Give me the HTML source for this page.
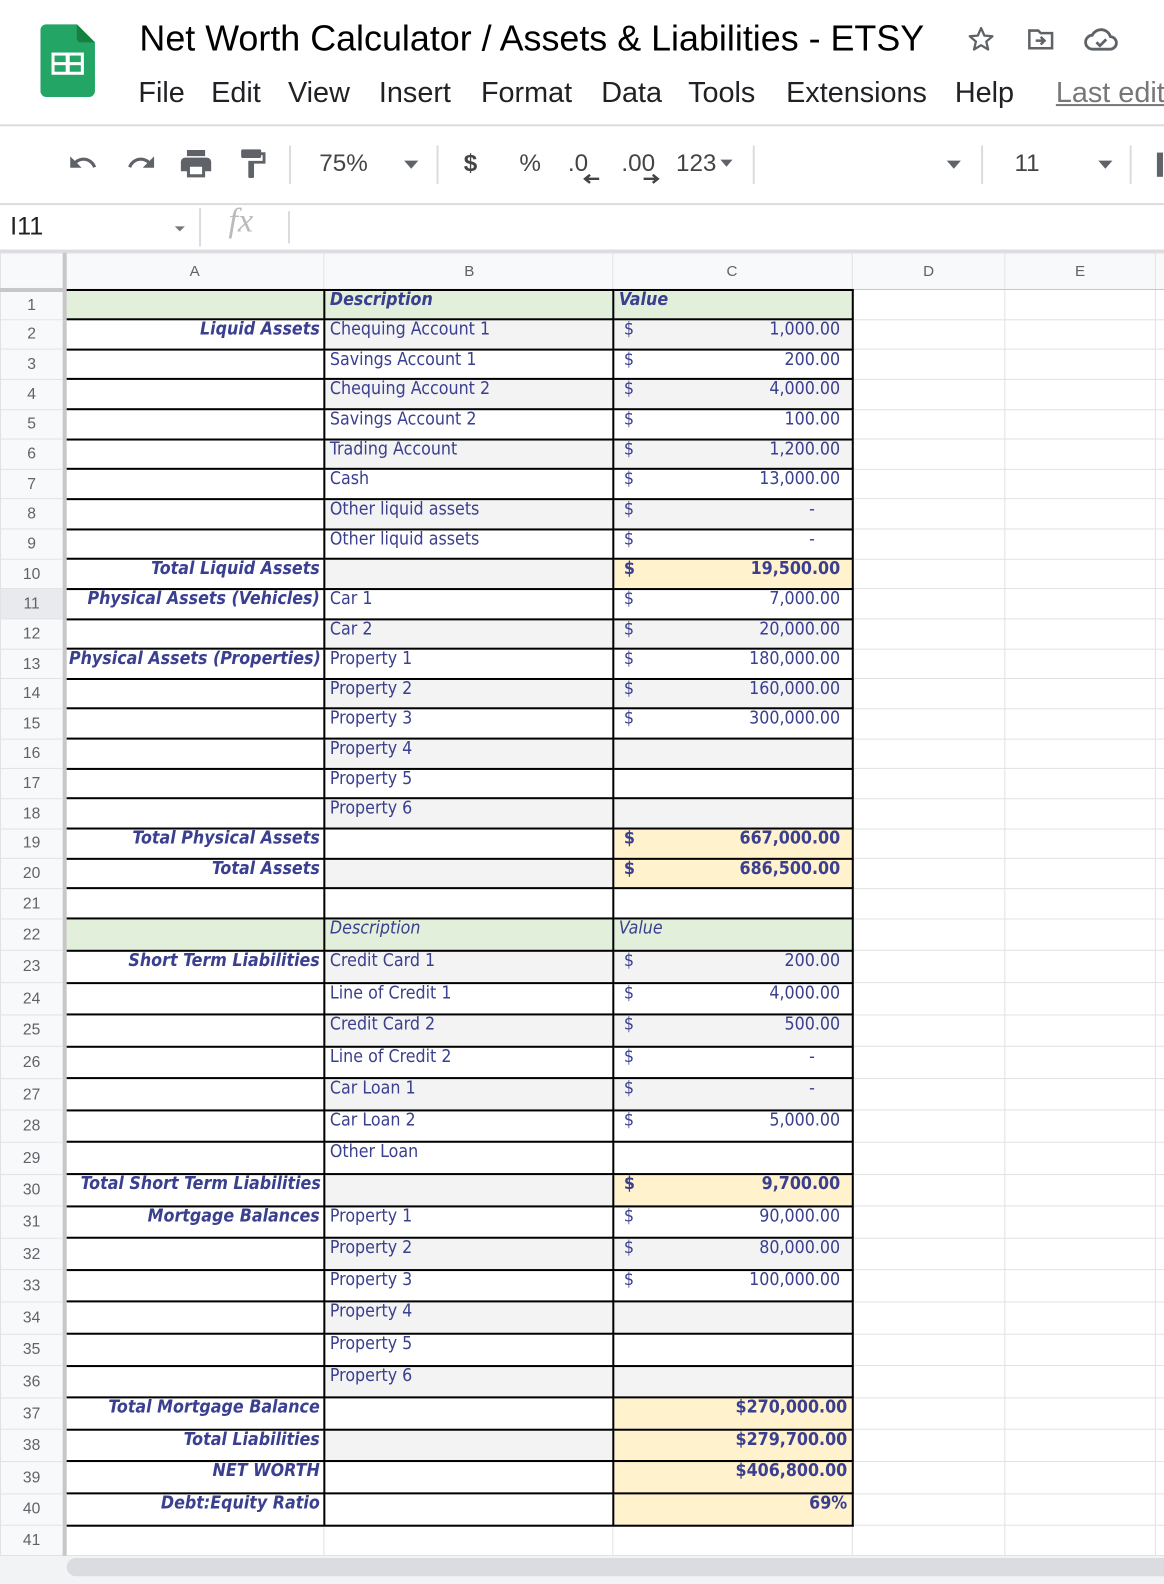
<!DOCTYPE html>
<html><head><meta charset="utf-8">
<style>
*{margin:0;padding:0;box-sizing:border-box}
body{width:1164px;height:1584px;overflow:hidden;background:#fff;font-family:"Liberation Sans",sans-serif;position:relative}
#w{position:absolute;left:0;top:0;width:1152px;height:1568px;transform:scale(1.0104);transform-origin:0 0;overflow:hidden}
.abs{position:absolute}
.title{left:138px;top:18px;font-size:35.5px;color:#000;white-space:nowrap}
.menu{top:76px;font-size:28.5px;color:#202124;white-space:nowrap}
.tb{top:148px;font-size:24px;color:#444;white-space:nowrap}
table{position:absolute;left:0;top:250px;width:1173px;border-collapse:collapse;table-layout:fixed;font-family:"DejaVu Sans Condensed","DejaVu Sans",sans-serif;font-size:17.5px;color:#3a3f8f}
td{border:1px solid #e2e2e2;padding:0 3px;vertical-align:top;line-height:19px;white-space:nowrap;overflow:hidden}
td:nth-child(3){padding-left:5px}
td:nth-child(4){padding:0 11px 0 10px}
td.y.ra{padding-right:4px}
td.rh{background:#f8f9fa;color:#5f6368;text-align:center;font-family:"Liberation Sans",sans-serif;font-size:15.5px;vertical-align:middle;border-right:4px solid #c7c7c7}
tr.ch td{background:#f8f9fa;color:#5f6368;text-align:center;font-family:"Liberation Sans",sans-serif;font-size:15px;vertical-align:middle;border-bottom:1px solid #c7c7c7}
td.k{border:2px solid #000}
td.g{background:#f3f3f3}
td.gr{background:#e2efda}
td.y{background:#fff2cc;font-weight:bold}
.ra{text-align:right}
.bi{font-weight:bold;font-style:italic}
.it{font-style:italic}
.d{display:flex;justify-content:space-between}
tr.a{height:29.65px}
tr.b{height:31.6px}
</style></head><body><div id="w">
<svg class="abs" style="left:40px;top:24px" width="54" height="72" viewBox="0 0 54 72"><path d="M6 0H36L54 18V66a6 6 0 0 1-6 6H6a6 6 0 0 1-6-6V6a6 6 0 0 1 6-6z" fill="#23a566"/><path d="M36 0L54 18H40a4 4 0 0 1-4-4z" fill="#16803f"/><rect x="11" y="28" width="32" height="22" fill="#fff"/><rect x="14" y="31" width="11" height="6.5" fill="#23a566"/><rect x="29" y="31" width="11" height="6.5" fill="#23a566"/><rect x="14" y="40.5" width="11" height="6.5" fill="#23a566"/><rect x="29" y="40.5" width="11" height="6.5" fill="#23a566"/></svg>
<div class="abs title">Net Worth Calculator / Assets &amp; Liabilities - ETSY</div>
<svg class="abs" style="left:955px;top:24px" width="32" height="30" viewBox="0 0 24 24"><path d="M12 3l2.6 6 6.4.5-4.9 4.2 1.5 6.3L12 16.6 6.4 20l1.5-6.3L3 9.5l6.4-.5z" fill="none" stroke="#5f6368" stroke-width="1.8" stroke-linejoin="round"/></svg>
<svg class="abs" style="left:1013px;top:24px" width="34" height="30" viewBox="0 0 24 24"><path d="M3 5h7l2 2h9v12H3z" fill="none" stroke="#5f6368" stroke-width="2"/><path d="M8 13h7M12 10l3 3-3 3" fill="none" stroke="#5f6368" stroke-width="2"/></svg>
<svg class="abs" style="left:1072px;top:25px" width="36" height="28" viewBox="0 0 26 20"><path d="M7 17a5 5 0 0 1-.5-10A7 7 0 0 1 19.5 8 4.5 4.5 0 0 1 19 17z" fill="none" stroke="#5f6368" stroke-width="2"/><path d="M9.5 12l2.5 2.5 4.5-4.5" fill="none" stroke="#5f6368" stroke-width="2"/></svg>
<div class="abs menu" style="left:137px">File</div>
<div class="abs menu" style="left:209px">Edit</div>
<div class="abs menu" style="left:285px">View</div>
<div class="abs menu" style="left:375px">Insert</div>
<div class="abs menu" style="left:476px">Format</div>
<div class="abs menu" style="left:595px">Data</div>
<div class="abs menu" style="left:681px">Tools</div>
<div class="abs menu" style="left:778px">Extensions</div>
<div class="abs menu" style="left:945px">Help</div>
<div class="abs menu" style="left:1045px;color:#777;text-decoration:underline">Last edit</div>
<div class="abs" style="left:0;top:123px;width:1164px;height:2px;background:#dadce0"></div>
<svg class="abs" style="left:62px;top:146px" width="40" height="30" viewBox="0 0 24 24"><path d="M12.5 8c-2.6 0-5 1-6.9 2.6L2 7v9h9l-3.6-3.6c1.4-1.2 3.2-1.9 5.1-1.9 3.5 0 6.5 2.3 7.6 5.5l2.4-.8C21.1 11 17.1 8 12.5 8z" fill="#5f6368"/></svg>
<svg class="abs" style="left:120px;top:146px" width="40" height="30" viewBox="0 0 24 24"><path d="M11.5 8c2.6 0 5 1 6.9 2.6L22 7v9h-9l3.6-3.6c-1.4-1.2-3.2-1.9-5.1-1.9-3.5 0-6.5 2.3-7.6 5.5L1.5 15.2C2.9 11 6.9 8 11.5 8z" fill="#5f6368"/></svg>
<svg class="abs" style="left:175px;top:144px" width="38" height="36" viewBox="0 0 24 24"><path d="M19 8H5c-1.7 0-3 1.3-3 3v6h4v4h12v-4h4v-6c0-1.7-1.3-3-3-3zm-3 11H8v-5h8v5zM18 3H6v4h12z" fill="#5f6368"/></svg>
<svg class="abs" style="left:233px;top:144px" width="34" height="36" viewBox="0 0 24 24"><path d="M18 4V3c0-.6-.4-1-1-1H5c-.6 0-1 .4-1 1v4c0 .6.4 1 1 1h12c.6 0 1-.4 1-1V6h1v4H9v11c0 .6.4 1 1 1h2c.6 0 1-.4 1-1v-9h8V4z" fill="#5f6368"/></svg>
<div class="abs" style="left:286px;top:144px;width:2px;height:38px;background:#dadce0"></div>
<div class="abs tb" style="left:316px">75%</div>
<div class="abs" style="left:400px;top:159px;border:7px solid transparent;border-top:8px solid #5f6368"></div>
<div class="abs" style="left:432px;top:144px;width:2px;height:38px;background:#dadce0"></div>
<div class="abs tb" style="left:459px;font-weight:bold">$</div>
<div class="abs tb" style="left:514px">%</div>
<div class="abs tb" style="left:562px">.0</div>
<svg class="abs" style="left:576px;top:172px" width="18" height="10" viewBox="0 0 18 10"><path d="M17 5H4M8 1L3 5l5 4" fill="none" stroke="#444" stroke-width="2.4"/></svg>
<div class="abs tb" style="left:615px">.00</div>
<svg class="abs" style="left:636px;top:172px" width="18" height="10" viewBox="0 0 18 10"><path d="M1 5h13M10 1l5 4-5 4" fill="none" stroke="#444" stroke-width="2.4"/></svg>
<div class="abs tb" style="left:669px">123</div>
<div class="abs" style="left:713px;top:158px;border:6px solid transparent;border-top:7px solid #5f6368"></div>
<div class="abs" style="left:745px;top:144px;width:2px;height:38px;background:#dadce0"></div>
<div class="abs" style="left:937px;top:159px;border:7px solid transparent;border-top:8px solid #5f6368"></div>
<div class="abs" style="left:971px;top:144px;width:2px;height:38px;background:#dadce0"></div>
<div class="abs tb" style="left:1004px">11</div>
<div class="abs" style="left:1087px;top:159px;border:7px solid transparent;border-top:8px solid #5f6368"></div>
<div class="abs" style="left:1118px;top:144px;width:2px;height:38px;background:#dadce0"></div>
<div class="abs" style="left:1145px;top:151px;width:6px;height:24px;background:#5f6368"></div>
<div class="abs" style="left:0;top:201px;width:1164px;height:2px;background:#dadce0"></div>
<div class="abs" style="left:10px;top:210px;font-size:25px;color:#202124">I11</div>
<div class="abs" style="left:173px;top:224px;border:5px solid transparent;border-top:5px solid #777"></div>
<div class="abs" style="left:197px;top:206px;width:2px;height:38px;background:#dadce0"></div>
<div class="abs" style="left:226px;top:200px;font-family:'Liberation Serif',serif;font-style:italic;font-size:34px;color:#bbb">fx</div>
<div class="abs" style="left:285px;top:209px;width:2px;height:32px;background:#dadce0"></div>
<div class="abs" style="left:0;top:247px;width:1164px;height:3px;background:#dadce0"></div>

<table>
<colgroup><col style="width:63px"><col style="width:257px"><col style="width:286px"><col style="width:237px"><col style="width:151px"><col style="width:149px"><col style="width:30px"></colgroup>
<tr class="ch" style="height:36px"><td style="border-right:4px solid #c7c7c7;border-bottom:4px solid #c7c7c7"></td><td>A</td><td>B</td><td>C</td><td>D</td><td>E</td><td></td></tr>
<tr class="a"><td class="rh">1</td><td class="k gr"></td><td class="k gr bi">Description</td><td class="k gr bi" style="padding-left:5px">Value</td><td></td><td></td><td></td></tr>
<tr class="a"><td class="rh">2</td><td class="k ra bi">Liquid Assets</td><td class="k g">Chequing Account 1</td><td class="k g"><div class="d"><span>$</span><span>1,000.00</span></div></td><td></td><td></td><td></td></tr>
<tr class="a"><td class="rh">3</td><td class="k"></td><td class="k">Savings Account 1</td><td class="k"><div class="d"><span>$</span><span>200.00</span></div></td><td></td><td></td><td></td></tr>
<tr class="a"><td class="rh">4</td><td class="k"></td><td class="k g">Chequing Account 2</td><td class="k g"><div class="d"><span>$</span><span>4,000.00</span></div></td><td></td><td></td><td></td></tr>
<tr class="a"><td class="rh">5</td><td class="k"></td><td class="k">Savings Account 2</td><td class="k"><div class="d"><span>$</span><span>100.00</span></div></td><td></td><td></td><td></td></tr>
<tr class="a"><td class="rh">6</td><td class="k"></td><td class="k g">Trading Account</td><td class="k g"><div class="d"><span>$</span><span>1,200.00</span></div></td><td></td><td></td><td></td></tr>
<tr class="a"><td class="rh">7</td><td class="k"></td><td class="k">Cash</td><td class="k"><div class="d"><span>$</span><span>13,000.00</span></div></td><td></td><td></td><td></td></tr>
<tr class="a"><td class="rh">8</td><td class="k"></td><td class="k g">Other liquid assets</td><td class="k g"><div class="d"><span>$</span><span>-&nbsp;&nbsp;&nbsp;&nbsp;&nbsp;</span></div></td><td></td><td></td><td></td></tr>
<tr class="a"><td class="rh">9</td><td class="k"></td><td class="k">Other liquid assets</td><td class="k"><div class="d"><span>$</span><span>-&nbsp;&nbsp;&nbsp;&nbsp;&nbsp;</span></div></td><td></td><td></td><td></td></tr>
<tr class="a"><td class="rh">10</td><td class="k ra bi">Total Liquid Assets</td><td class="k g"></td><td class="k y"><div class="d"><span>$</span><span>19,500.00</span></div></td><td></td><td></td><td></td></tr>
<tr class="a"><td class="rh" style="background:#e8eaed">11</td><td class="k ra bi">Physical Assets (Vehicles)</td><td class="k">Car 1</td><td class="k"><div class="d"><span>$</span><span>7,000.00</span></div></td><td></td><td></td><td></td></tr>
<tr class="a"><td class="rh">12</td><td class="k"></td><td class="k g">Car 2</td><td class="k g"><div class="d"><span>$</span><span>20,000.00</span></div></td><td></td><td></td><td></td></tr>
<tr class="a"><td class="rh">13</td><td class="k ra bi" style="padding:0 2px">Physical Assets (Properties)</td><td class="k">Property 1</td><td class="k"><div class="d"><span>$</span><span>180,000.00</span></div></td><td></td><td></td><td></td></tr>
<tr class="a"><td class="rh">14</td><td class="k"></td><td class="k g">Property 2</td><td class="k g"><div class="d"><span>$</span><span>160,000.00</span></div></td><td></td><td></td><td></td></tr>
<tr class="a"><td class="rh">15</td><td class="k"></td><td class="k">Property 3</td><td class="k"><div class="d"><span>$</span><span>300,000.00</span></div></td><td></td><td></td><td></td></tr>
<tr class="a"><td class="rh">16</td><td class="k"></td><td class="k g">Property 4</td><td class="k g"></td><td></td><td></td><td></td></tr>
<tr class="a"><td class="rh">17</td><td class="k"></td><td class="k">Property 5</td><td class="k"></td><td></td><td></td><td></td></tr>
<tr class="a"><td class="rh">18</td><td class="k"></td><td class="k g">Property 6</td><td class="k g"></td><td></td><td></td><td></td></tr>
<tr class="a"><td class="rh">19</td><td class="k ra bi">Total Physical Assets</td><td class="k"></td><td class="k y"><div class="d"><span>$</span><span>667,000.00</span></div></td><td></td><td></td><td></td></tr>
<tr class="a"><td class="rh">20</td><td class="k ra bi">Total Assets</td><td class="k g"></td><td class="k y"><div class="d"><span>$</span><span>686,500.00</span></div></td><td></td><td></td><td></td></tr>
<tr style="height:30px"><td class="rh">21</td><td class="k"></td><td class="k"></td><td class="k"></td><td></td><td></td><td></td></tr>
<tr class="b"><td class="rh">22</td><td class="k gr"></td><td class="k gr it">Description</td><td class="k gr it" style="padding-left:5px">Value</td><td></td><td></td><td></td></tr>
<tr class="b"><td class="rh">23</td><td class="k ra bi">Short Term Liabilities</td><td class="k g">Credit Card 1</td><td class="k g"><div class="d"><span>$</span><span>200.00</span></div></td><td></td><td></td><td></td></tr>
<tr class="b"><td class="rh">24</td><td class="k"></td><td class="k">Line of Credit 1</td><td class="k"><div class="d"><span>$</span><span>4,000.00</span></div></td><td></td><td></td><td></td></tr>
<tr class="b"><td class="rh">25</td><td class="k"></td><td class="k g">Credit Card 2</td><td class="k g"><div class="d"><span>$</span><span>500.00</span></div></td><td></td><td></td><td></td></tr>
<tr class="b"><td class="rh">26</td><td class="k"></td><td class="k">Line of Credit 2</td><td class="k"><div class="d"><span>$</span><span>-&nbsp;&nbsp;&nbsp;&nbsp;&nbsp;</span></div></td><td></td><td></td><td></td></tr>
<tr class="b"><td class="rh">27</td><td class="k"></td><td class="k g">Car Loan 1</td><td class="k g"><div class="d"><span>$</span><span>-&nbsp;&nbsp;&nbsp;&nbsp;&nbsp;</span></div></td><td></td><td></td><td></td></tr>
<tr class="b"><td class="rh">28</td><td class="k"></td><td class="k">Car Loan 2</td><td class="k"><div class="d"><span>$</span><span>5,000.00</span></div></td><td></td><td></td><td></td></tr>
<tr class="b"><td class="rh">29</td><td class="k"></td><td class="k">Other Loan</td><td class="k"></td><td></td><td></td><td></td></tr>
<tr class="b"><td class="rh">30</td><td class="k ra bi" style="padding:0 2px">Total Short Term Liabilities</td><td class="k g"></td><td class="k y"><div class="d"><span>$</span><span>9,700.00</span></div></td><td></td><td></td><td></td></tr>
<tr class="b"><td class="rh">31</td><td class="k ra bi">Mortgage Balances</td><td class="k">Property 1</td><td class="k"><div class="d"><span>$</span><span>90,000.00</span></div></td><td></td><td></td><td></td></tr>
<tr class="b"><td class="rh">32</td><td class="k"></td><td class="k g">Property 2</td><td class="k g"><div class="d"><span>$</span><span>80,000.00</span></div></td><td></td><td></td><td></td></tr>
<tr class="b"><td class="rh">33</td><td class="k"></td><td class="k">Property 3</td><td class="k"><div class="d"><span>$</span><span>100,000.00</span></div></td><td></td><td></td><td></td></tr>
<tr class="b"><td class="rh">34</td><td class="k"></td><td class="k g">Property 4</td><td class="k g"></td><td></td><td></td><td></td></tr>
<tr class="b"><td class="rh">35</td><td class="k"></td><td class="k">Property 5</td><td class="k"></td><td></td><td></td><td></td></tr>
<tr class="b"><td class="rh">36</td><td class="k"></td><td class="k g">Property 6</td><td class="k g"></td><td></td><td></td><td></td></tr>
<tr class="b"><td class="rh">37</td><td class="k ra bi">Total Mortgage Balance</td><td class="k"></td><td class="k y ra">$270,000.00</td><td></td><td></td><td></td></tr>
<tr class="b"><td class="rh">38</td><td class="k ra bi">Total Liabilities</td><td class="k g"></td><td class="k y ra">$279,700.00</td><td></td><td></td><td></td></tr>
<tr class="b"><td class="rh">39</td><td class="k ra bi">NET WORTH</td><td class="k"></td><td class="k y ra">$406,800.00</td><td></td><td></td><td></td></tr>
<tr class="b"><td class="rh">40</td><td class="k ra bi">Debt:Equity Ratio</td><td class="k"></td><td class="k y ra">69%</td><td></td><td></td><td></td></tr>
<tr style="height:30px"><td class="rh">41</td><td></td><td></td><td></td><td></td><td></td><td></td></tr>
</table>
<div class="abs" style="left:0;top:1540px;width:1164px;height:44px;background:#f1f3f4"></div>
<div class="abs" style="left:66px;top:1542px;width:1098px;height:18px;background:#dadce0;border-radius:9px"></div>
</div></body></html>
